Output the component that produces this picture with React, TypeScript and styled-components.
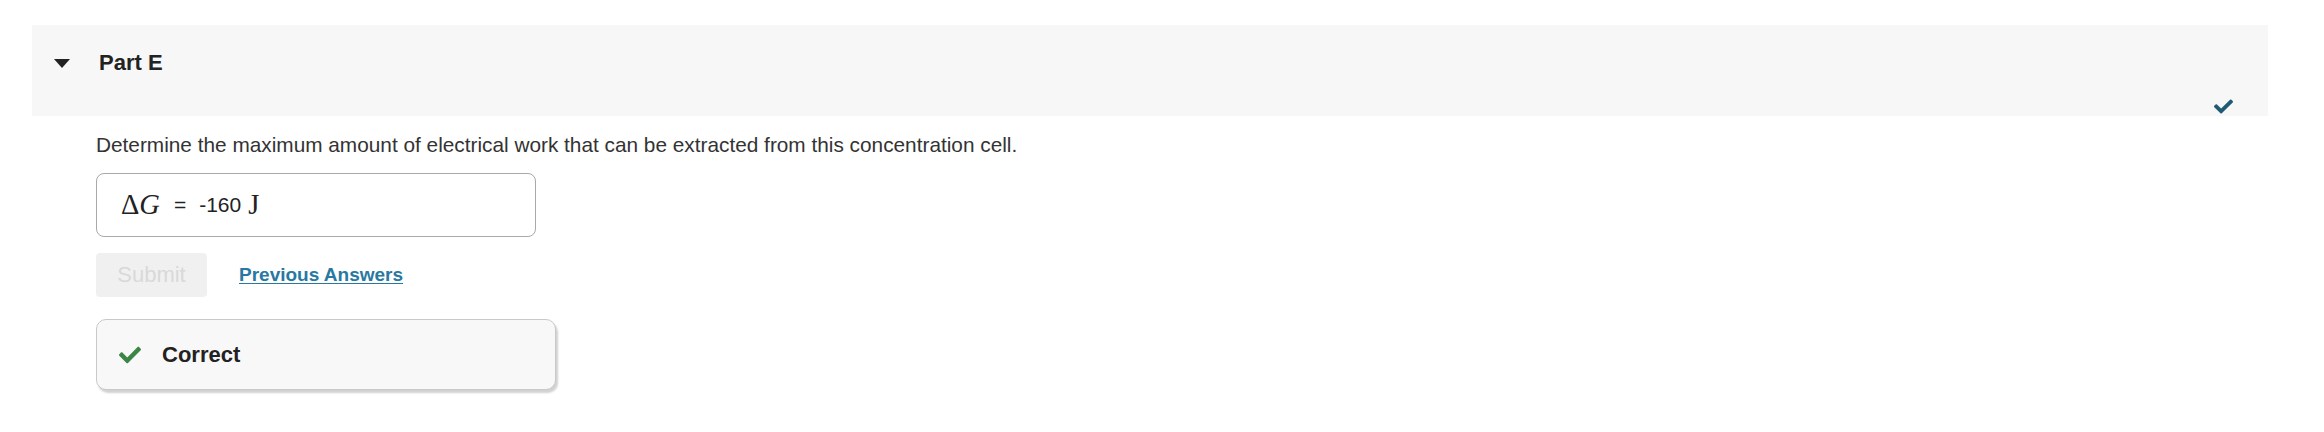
import styled, { createGlobalStyle } from "styled-components"
import { FaCheck } from "react-icons/fa"

const GlobalStyle = createGlobalStyle`
    html, body {
        margin: 0;
        padding: 0;
        background: #ffffff;
    }

    body {
        font-family: "Liberation Sans", Arial, Helvetica, sans-serif;
        color: #333333;
    }
`;

const Page = styled.div`
    padding: 25px 56px 40px 32px;
`;

const Header = styled.div`
    display: flex;
    align-items: flex-start;
    height: 91px;
    box-sizing: border-box;
    padding: 25px 35px 0 22px;
    background-color: #f7f7f7;
`;

const Toggle = styled.div`
    display: flex;
    align-items: center;
    gap: 29px;
    height: 26px;
`;

const Caret = styled.span`
    width: 0;
    height: 0;
    border-left: 8.5px solid transparent;
    border-right: 8.5px solid transparent;
    border-top: 9px solid #222222;
`;

const Title = styled.h2`
    margin: 0;
    font-size: 22px;
    line-height: 26px;
    font-weight: 700;
    color: #222222;
`;

const StatusCheck = styled.span`
    display: flex;
    margin-left: auto;
    align-self: flex-end;
    color: #1f5b72;
`;

const Body = styled.div`
    padding: 13px 0 0 64px;
`;

const Prompt = styled.p`
    margin: 0;
    font-size: 20.8px;
    line-height: 31px;
    color: #333333;
`;

const AnswerField = styled.div`
    display: flex;
    align-items: center;
    width: 440px;
    height: 64px;
    box-sizing: border-box;
    margin-top: 13px;
    padding-left: 24px;
    border: 1.5px solid #a9a9a9;
    border-radius: 8px;
    color: #222222;
`;

const MathVar = styled.span<{ $italic?: boolean }>`
    font-family: "Liberation Serif", "Times New Roman", serif;
    font-size: 28.5px;
    font-style: ${p => (p.$italic ? "italic" : "normal")};
`;

const Equals = styled.span`
    margin: 0 13px 0 14px;
    font-size: 21px;
`;

const Value = styled.span`
    font-size: 21px;
    margin-right: 7px;
`;

const Actions = styled.div`
    display: flex;
    align-items: center;
    gap: 32px;
    margin-top: 16px;
`;

const SubmitButton = styled.button`
    width: 111px;
    height: 44px;
    border: none;
    border-radius: 4px;
    background-color: #f0f0f0;
    color: #d9d9d9;
    font-family: inherit;
    font-size: 22px;
    padding: 0;
`;

const HistoryLink = styled.a`
    font-size: 19px;
    font-weight: 700;
    color: #2878a2;
    text-decoration: underline;
    text-underline-offset: 2px;
`;

const Feedback = styled.div`
    display: flex;
    align-items: center;
    gap: 21px;
    width: 460px;
    height: 71px;
    box-sizing: border-box;
    margin-top: 22px;
    padding-left: 22px;
    background-color: #f8f8f8;
    border: 1.5px solid #c9c9c9;
    border-radius: 10px;
    box-shadow: 2px 3px 2px rgba(0, 0, 0, 0.18);
`;

const FeedbackIcon = styled.span`
    display: flex;
    color: #3b8646;
`;

const FeedbackText = styled.span`
    font-size: 22px;
    font-weight: 700;
    color: #222222;
`;

export default function App() {
    return (
        <Page>
            <GlobalStyle />
            <Header>
                <Toggle>
                    <Caret />
                    <Title>Part E</Title>
                </Toggle>
                <StatusCheck>
                    <FaCheck size={19} />
                </StatusCheck>
            </Header>
            <Body>
                <Prompt>Determine the maximum amount of electrical work that can be extracted from this concentration cell.</Prompt>
                <AnswerField>
                    <MathVar>Δ</MathVar>
                    <MathVar $italic>G</MathVar>
                    <Equals>=</Equals>
                    <Value>-160</Value>
                    <MathVar>J</MathVar>
                </AnswerField>
                <Actions>
                    <SubmitButton disabled>Submit</SubmitButton>
                    <HistoryLink href="#">Previous Answers</HistoryLink>
                </Actions>
                <Feedback>
                    <FeedbackIcon>
                        <FaCheck size={22} />
                    </FeedbackIcon>
                    <FeedbackText>Correct</FeedbackText>
                </Feedback>
            </Body>
        </Page>
    );
}
